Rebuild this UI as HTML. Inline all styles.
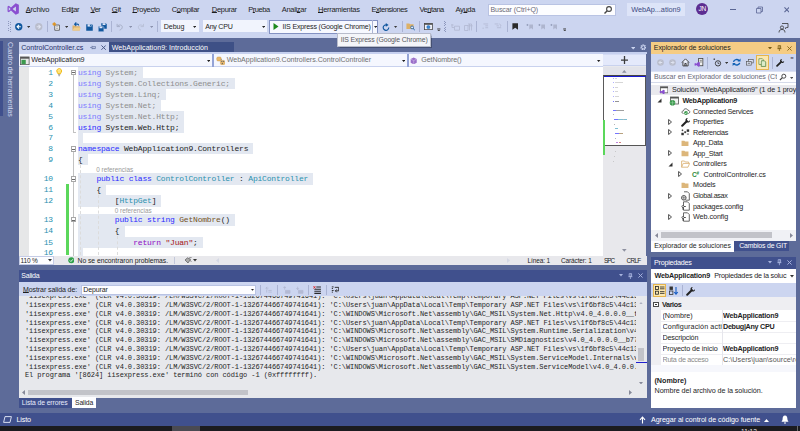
<!DOCTYPE html>
<html>
<head>
<meta charset="utf-8">
<title>Visual Studio</title>
<style>
*{box-sizing:border-box;margin:0;padding:0}
html,body{width:800px;height:431px;overflow:hidden;background:#5d6b99;font-family:"Liberation Sans",sans-serif;font-size:7px;color:#1e1e1e}
.a{position:absolute;white-space:nowrap}
.t{position:absolute;white-space:nowrap;line-height:10px;font-size:7px}
u{text-decoration:underline;text-decoration-thickness:0.55px;text-underline-offset:0.4px}
.code{position:absolute;left:0;white-space:pre;font-family:"Liberation Mono",monospace;font-size:8px;letter-spacing:-0.2px;line-height:11px;height:11px;color:#1e1e1e}
.sel{background:#e3e8f1}
.kw{color:#2a2aff}
.kw2{color:#7b7bff}
.gy{color:#8e8e8e}
.ty{color:#2b91af}
.st{color:#a31515}
.ct{color:#8f08c4}
.mt{color:#74531f}
.ln{position:absolute;left:28.8px;width:24px;text-align:right;font-family:"Liberation Mono",monospace;font-size:8px;letter-spacing:-0.22px;line-height:11px;color:#2b91af}
.out{position:absolute;white-space:pre;font-family:"Liberation Mono",monospace;font-size:7px;letter-spacing:-0.086px;line-height:9px;color:#1e1e1e}
b{font-weight:bold}
</style>
</head>
<body>
<div id="menus"><div class="a" style="left:0px;top:0px;width:800px;height:37.7px;background:#ccd5f0;"></div><svg class="a" style="left:6.8px;top:3.1px" width="12.4" height="12" viewBox="0 0 22 22"><path d="M15.6 0.6 L21.4 3.2 V18.8 L15.6 21.4 L6.9 13.6 L3 16.8 L0.6 15.6 V6.4 L3 5.2 L6.9 8.4 Z M16 6.3 L9.8 11 L16 15.7 Z M2.9 7.8 V14.2 L6.3 11 Z" fill="#8a4fd0" fill-rule="evenodd"/></svg><div class="t" style="left:25.8px;top:4.699999999999999px;font-size:7.5px;color:#1e1e1e;letter-spacing:-0.219px;"><u>A</u>rchivo</div><div class="t" style="left:61.6px;top:4.699999999999999px;font-size:7.5px;color:#1e1e1e;letter-spacing:-0.352px;">Edi<u>t</u>ar</div><div class="t" style="left:90.5px;top:4.699999999999999px;font-size:7.5px;color:#1e1e1e;letter-spacing:-0.455px;"><u>V</u>er</div><div class="t" style="left:111.8px;top:4.699999999999999px;font-size:7.5px;color:#1e1e1e;letter-spacing:-0.131px;"><u>G</u>it</div><div class="t" style="left:132.4px;top:4.699999999999999px;font-size:7.5px;color:#1e1e1e;letter-spacing:-0.303px;"><u>P</u>royecto</div><div class="t" style="left:171.7px;top:4.699999999999999px;font-size:7.5px;color:#1e1e1e;letter-spacing:-0.302px;">C<u>o</u>mpilar</div><div class="t" style="left:211.8px;top:4.699999999999999px;font-size:7.5px;color:#1e1e1e;letter-spacing:-0.301px;"><u>D</u>epurar</div><div class="t" style="left:248.2px;top:4.699999999999999px;font-size:7.5px;color:#1e1e1e;letter-spacing:-0.434px;">P<u>r</u>ueba</div><div class="t" style="left:281.8px;top:4.699999999999999px;font-size:7.5px;color:#1e1e1e;letter-spacing:-0.326px;">Anali<u>z</u>ar</div><div class="t" style="left:318px;top:4.699999999999999px;font-size:7.5px;color:#1e1e1e;letter-spacing:-0.286px;"><u>H</u>erramientas</div><div class="t" style="left:371.5px;top:4.699999999999999px;font-size:7.5px;color:#1e1e1e;letter-spacing:-0.470px;">E<u>x</u>tensiones</div><div class="t" style="left:419.5px;top:4.699999999999999px;font-size:7.5px;color:#1e1e1e;letter-spacing:-0.464px;">Ve<u>n</u>tana</div><div class="t" style="left:455.4px;top:4.699999999999999px;font-size:7.5px;color:#1e1e1e;letter-spacing:-0.288px;">Ay<u>u</u>da</div><div class="a" style="left:488px;top:3.7px;width:128px;height:12px;background:#fdfdff;border:0.5px solid #b9c3e3"></div><div class="t" style="left:490.5px;top:4.6px;font-size:7.0px;color:#6a6a78;letter-spacing:-0.081px;">Buscar (Ctrl+Q)</div><svg class="a" style="left:603px;top:4.5px" width="10" height="10" viewBox="0 0 10 10"><circle cx="6" cy="4" r="2.4" fill="none" stroke="#444" stroke-width="1.1"/><path d="M4.2 5.8 L1.5 8.5" stroke="#444" stroke-width="1.4"/></svg><div class="a" style="left:627px;top:3px;width:58px;height:13px;background:#dde4f8;"></div><div class="t" style="left:631.2px;top:4.5px;font-size:7.3px;color:#3b4a82;letter-spacing:-0.026px;">WebAp...ation9</div><div class="a" style="left:696.2px;top:3.4px;width:11.8px;height:11.8px;background:#5c2d91;border-radius:6px"></div><div class="t" style="left:698.4px;top:4.4px;font-size:6.6px;color:#fff;letter-spacing:-0.2px;">JN</div><div class="a" style="left:730px;top:9.2px;width:6px;height:0.8px;background:#5a6694;"></div><svg class="a" style="left:755px;top:5px" width="10" height="10" viewBox="0 0 10 10"><path d="M1.5 3.5 H6 V8 H1.5 Z M3 3.5 V2 H7.5 V6.5 H6" fill="none" stroke="#5a6694" stroke-width="0.8"/></svg><svg class="a" style="left:783.5px;top:7.2px" width="5.6" height="5.6" viewBox="0 0 6 6"><path d="M0.5 0.5 L5.5 5.5 M5.5 0.5 L0.5 5.5" stroke="#5a6694" stroke-width="1.15"/></svg></div>
<div id="toolbar"><div class="a" style="left:8px;top:21.0px;width:1px;height:1px;background:#8e98bd;"></div><div class="a" style="left:9.5px;top:22.1px;width:1px;height:1px;background:#8e98bd;"></div><div class="a" style="left:8px;top:23.2px;width:1px;height:1px;background:#8e98bd;"></div><div class="a" style="left:9.5px;top:24.3px;width:1px;height:1px;background:#8e98bd;"></div><div class="a" style="left:8px;top:25.4px;width:1px;height:1px;background:#8e98bd;"></div><div class="a" style="left:9.5px;top:26.5px;width:1px;height:1px;background:#8e98bd;"></div><div class="a" style="left:8px;top:27.6px;width:1px;height:1px;background:#8e98bd;"></div><div class="a" style="left:9.5px;top:28.700000000000003px;width:1px;height:1px;background:#8e98bd;"></div><div class="a" style="left:8px;top:29.8px;width:1px;height:1px;background:#8e98bd;"></div><div class="a" style="left:9.5px;top:30.900000000000002px;width:1px;height:1px;background:#8e98bd;"></div><svg class="a" style="left:15px;top:23px" width="7.5" height="7.5" viewBox="0 0 9 9"><circle cx="4.5" cy="4.5" r="4.4" fill="#10579e"/><path d="M4.8 2.2 L2.5 4.5 L4.8 6.8 M2.8 4.5 H7" stroke="#fff" stroke-width="1.3" fill="none"/></svg><svg class="a" style="left:27.3px;top:26px" width="3.2" height="2" viewBox="0 0 5 3"><path d="M0 0 H5 L2.5 3 Z" fill="#3a3a3a"/></svg><svg class="a" style="left:35px;top:23px" width="7.5" height="7.5" viewBox="0 0 9 9"><circle cx="4.5" cy="4.5" r="4.4" fill="#b9bdcc"/><path d="M4.2 2.2 L6.5 4.5 L4.2 6.8 M6.2 4.5 H2" stroke="#dfe3f1" stroke-width="1.3" fill="none"/></svg><div class="a" style="left:47.2px;top:21px;width:0.8px;height:11px;background:#aab3d3;"></div><svg class="a" style="left:52.2px;top:22.4px" width="8.4" height="8.8" viewBox="0 0 10 11"><path d="M3.2 3.8 H9 V10.3 H3.2 Z" fill="#f7f7f7" stroke="#4a4a4a" stroke-width="1"/><path d="M4.8 6 H7.4 M4.8 8 H7.4" stroke="#888" stroke-width="0.8"/><circle cx="2.6" cy="2.6" r="2.1" fill="#e9a53c"/><path d="M2.6 0.2 V5 M0.2 2.6 H5" stroke="#d28a20" stroke-width="0.8"/></svg><svg class="a" style="left:65.3px;top:26px" width="3.2" height="2" viewBox="0 0 5 3"><path d="M0 0 H5 L2.5 3 Z" fill="#3a3a3a"/></svg><svg class="a" style="left:72px;top:22.4px" width="9" height="9" viewBox="0 0 11 11"><path d="M0.6 4.2 H4 L5 5.2 H9.6 V10.4 H0.6 Z" fill="#dcb067"/><path d="M0.6 10.4 L2.6 6.6 H10.8 L9.2 10.4 Z" fill="#f0cc8c"/><path d="M5.2 0.6 L3.2 2.6 L5.2 4.6 M3.4 2.6 H6.5 C7.8 2.6 8.2 3.4 8.2 4.4" stroke="#10579e" stroke-width="1.3" fill="none"/></svg><svg class="a" style="left:86px;top:23.5px" width="7" height="7" viewBox="0 0 9 9"><path d="M0.3 0.3 H7.6 L8.7 1.4 V8.7 H0.3 Z" fill="#10579e"/><rect x="2" y="0.3" width="5" height="3" fill="#dfe6fa"/><rect x="5" y="0.8" width="1.3" height="2" fill="#10579e"/></svg><svg class="a" style="left:98px;top:22.5px" width="9" height="9" viewBox="0 0 11 11"><path d="M4 0.3 H9.6 L10.7 1.4 V7 H4 Z" fill="#10579e"/><rect x="5.6" y="0.3" width="3.5" height="2.2" fill="#dfe6fa"/><path d="M0.3 4 H6 L7.2 5.1 V10.7 H0.3 Z" fill="#10579e" stroke="#ccd5f0" stroke-width="0.7"/><rect x="1.8" y="4.4" width="3.6" height="2" fill="#dfe6fa"/></svg><div class="a" style="left:111px;top:21px;width:0.8px;height:11px;background:#aab3d3;"></div><svg class="a" style="left:116.4px;top:22.8px" width="7.6" height="7.8" viewBox="0 0 10 10"><path d="M1.5 1 V4.6 H5.2 M1.8 4.3 C3.8 1.4 8.6 2 8.2 5.6 C8 7.4 6.6 8.6 4.8 9.2" stroke="#a3aac2" stroke-width="1.2" fill="none"/></svg><svg class="a" style="left:129px;top:26px" width="3.2" height="2" viewBox="0 0 5 3"><path d="M0 0 H5 L2.5 3 Z" fill="#8b92ae"/></svg><svg class="a" style="left:136.8px;top:22.8px" width="7.6" height="7.8" viewBox="0 0 10 10"><path d="M8.5 1 V4.6 H4.8 M8.2 4.3 C6.2 1.4 1.4 2 1.8 5.6 C2 7.4 3.4 8.6 5.2 9.2" stroke="#b8bfd6" stroke-width="1.2" fill="none"/></svg><svg class="a" style="left:149.5px;top:26px" width="3.2" height="2" viewBox="0 0 5 3"><path d="M0 0 H5 L2.5 3 Z" fill="#8b92ae"/></svg><div class="a" style="left:157px;top:21px;width:0.8px;height:11px;background:#aab3d3;"></div><div class="a" style="left:161.4px;top:20.4px;width:37.2px;height:12px;background:#f1f4fd;"></div><div class="t" style="left:163.8px;top:21.7px;font-size:7.1px;color:#1e1e1e;letter-spacing:-0.081px;">Debug</div><svg class="a" style="left:193.3px;top:26px" width="3.2" height="2" viewBox="0 0 5 3"><path d="M0 0 H5 L2.5 3 Z" fill="#2a2a2a"/></svg><div class="a" style="left:203px;top:20.4px;width:63.6px;height:12px;background:#f1f4fd;"></div><div class="t" style="left:205.2px;top:21.7px;font-size:7.1px;color:#1e1e1e;letter-spacing:-0.253px;">Any CPU</div><svg class="a" style="left:261.5px;top:26px" width="3.2" height="2" viewBox="0 0 5 3"><path d="M0 0 H5 L2.5 3 Z" fill="#2a2a2a"/></svg><div class="a" style="left:269.3px;top:19.5px;width:109.2px;height:14.2px;background:#f6f8ff;border:0.9px solid #8391c2"></div><div class="a" style="left:371.8px;top:20.4px;width:0.8px;height:12.4px;background:#aab3d3;"></div><svg class="a" style="left:273.2px;top:23.2px" width="6" height="7" viewBox="0 0 6 7"><path d="M0.5 0 L5.5 3.5 L0.5 7 Z" fill="#1e8a1e"/></svg><div class="t" style="left:282.5px;top:21.7px;font-size:7.1px;color:#1e1e1e;letter-spacing:-0.183px;">IIS Express (Google Chrome)</div><svg class="a" style="left:373.7px;top:26px" width="3.2" height="2" viewBox="0 0 5 3"><path d="M0 0 H5 L2.5 3 Z" fill="#2a2a2a"/></svg><svg class="a" style="left:381.8px;top:23px" width="8" height="8.4" viewBox="0 0 9 10"><path d="M7.8 5.5 A3.3 3.3 0 1 1 5.5 2.3" stroke="#10579e" stroke-width="1.4" fill="none"/><path d="M4.3 0 L7.6 2.3 L4.3 4.6 Z" fill="#10579e"/></svg><svg class="a" style="left:394.4px;top:26px" width="3.2" height="2" viewBox="0 0 5 3"><path d="M0 0 H5 L2.5 3 Z" fill="#3a3a3a"/></svg><div class="a" style="left:401.5px;top:21px;width:0.8px;height:11px;background:#aab3d3;"></div><svg class="a" style="left:406px;top:23.2px" width="9.4" height="7.4" viewBox="0 0 11 9"><path d="M0.3 0.5 H3.8 L4.8 1.6 H9 V7.2 H0.3 Z" fill="#dcb067"/><circle cx="7.2" cy="5.4" r="1.7" fill="#e9eefc" stroke="#10579e" stroke-width="0.9"/><path d="M8.4 6.6 L10.4 8.6" stroke="#10579e" stroke-width="1.2"/></svg><div class="a" style="left:419.3px;top:21px;width:0.8px;height:11px;background:#aab3d3;"></div><svg class="a" style="left:424.3px;top:23.3px" width="8.8" height="7.2" viewBox="0 0 10 8"><rect x="0.5" y="0.5" width="9" height="7" fill="#f2f4fb" stroke="#444" stroke-width="0.9"/><rect x="0.5" y="0.5" width="9" height="1.4" fill="#444"/><circle cx="5" cy="4.6" r="1.9" fill="#3a8ad6" stroke="#10579e" stroke-width="0.5"/></svg><svg class="a" style="left:437.3px;top:27.8px" width="3.6" height="3.6" viewBox="0 0 5 5"><path d="M0.3 0.5 H4.7" stroke="#444" stroke-width="0.9"/><path d="M0 2 H5 L2.5 5 Z" fill="#444"/></svg><div class="a" style="left:443.5px;top:21.0px;width:1px;height:1px;background:#8e98bd;"></div><div class="a" style="left:445.0px;top:22.1px;width:1px;height:1px;background:#8e98bd;"></div><div class="a" style="left:443.5px;top:23.2px;width:1px;height:1px;background:#8e98bd;"></div><div class="a" style="left:445.0px;top:24.3px;width:1px;height:1px;background:#8e98bd;"></div><div class="a" style="left:443.5px;top:25.4px;width:1px;height:1px;background:#8e98bd;"></div><div class="a" style="left:445.0px;top:26.5px;width:1px;height:1px;background:#8e98bd;"></div><div class="a" style="left:443.5px;top:27.6px;width:1px;height:1px;background:#8e98bd;"></div><div class="a" style="left:445.0px;top:28.700000000000003px;width:1px;height:1px;background:#8e98bd;"></div><div class="a" style="left:443.5px;top:29.8px;width:1px;height:1px;background:#8e98bd;"></div><div class="a" style="left:445.0px;top:30.900000000000002px;width:1px;height:1px;background:#8e98bd;"></div><svg class="a" style="left:450.7px;top:22.6px" width="9" height="8" viewBox="0 0 9 8"><path d="M1 1 V4.5 M0.3 2 H2.5 M1 4.5 H3.5 M3.5 3.2 H8.5 V7.2 H3.5 Z" stroke="#b3bad4" stroke-width="0.9" fill="none"/></svg><svg class="a" style="left:463.6px;top:22.6px" width="9" height="8" viewBox="0 0 9 8"><path d="M0.5 2.5 H4 V7.5 H0.5 Z M4 1 H7.5 V7.5 M5.5 1 V7.5 M4 2.8 H8.6" stroke="#b3bad4" stroke-width="0.9" fill="none"/></svg><div class="a" style="left:476.2px;top:21px;width:0.8px;height:11px;background:#aab3d3;"></div><svg class="a" style="left:482.3px;top:23.3px" width="6.6" height="6.6" viewBox="0 0 7 7"><path d="M1.5 1 H6.5 M3.5 3 H6.5 M3.5 5 H6.5 M0.5 5.5 H2" stroke="#b3bad4" stroke-width="0.9" fill="none"/></svg><svg class="a" style="left:494.4px;top:23.3px" width="7.8" height="6.6" viewBox="0 0 8 7"><path d="M0.5 1 H4.5 M2.5 3 H5 M3 5 H7.5 M5.5 1 C7.5 1.5 7.5 3.5 6.2 4" stroke="#b3bad4" stroke-width="0.9" fill="none"/></svg><div class="a" style="left:507px;top:21px;width:0.8px;height:11px;background:#aab3d3;"></div><svg class="a" style="left:512px;top:23.3px" width="6.4" height="7" viewBox="0 0 7 8"><path d="M0.3 0.3 H6.7 V7.7 L3.5 5.4 L0.3 7.7 Z" fill="#2b2b2b"/></svg><svg class="a" style="left:525.5px;top:22.8px" width="7.4" height="7.2" viewBox="0 0 9 8"><path d="M4 1.5 H8.5 V7.5 L6.2 5.8 L4 7.5 Z" fill="#aeb5ce"/><path d="M0.5 2 L3 2 M1.8 0.8 V3.2" stroke="#8f97b5" stroke-width="0.9"/></svg><svg class="a" style="left:538px;top:22.8px" width="7.4" height="7.2" viewBox="0 0 9 8"><path d="M4 1.5 H8.5 V7.5 L6.2 5.8 L4 7.5 Z" fill="#aeb5ce"/><path d="M0.5 2 L3 2 M1.8 0.8 V3.2" stroke="#8f97b5" stroke-width="0.9"/></svg><svg class="a" style="left:550.2px;top:22.8px" width="7.4" height="7.2" viewBox="0 0 9 8"><path d="M4 1.5 H8.5 V7.5 L6.2 5.8 L4 7.5 Z" fill="#aeb5ce"/><path d="M0.5 2 L3 2 M1.8 0.8 V3.2" stroke="#8f97b5" stroke-width="0.9"/></svg><svg class="a" style="left:562.6px;top:27.8px" width="3.6" height="3.6" viewBox="0 0 5 5"><path d="M0.3 0.5 H4.7" stroke="#444" stroke-width="0.9"/><path d="M0 2 H5 L2.5 5 Z" fill="#444"/></svg><svg class="a" style="left:778px;top:21.5px" width="11" height="11" viewBox="0 0 11 11"><path d="M4 1.5 H10 V5.5 H8.5 L7.5 6.7 V5.5" stroke="#333" stroke-width="0.8" fill="none"/><circle cx="4" cy="5.5" r="1.6" stroke="#333" stroke-width="0.8" fill="none"/><path d="M1 10.5 C1 8 2.5 7.5 4 7.5 C5.5 7.5 7 8 7 10.5" stroke="#333" stroke-width="0.8" fill="none"/></svg></div>
<div id="leftstrip"><div class="a" style="left:0px;top:41px;width:3px;height:75px;background:#40508d;"></div><div class="a" style="left:13.6px;top:42px;transform-origin:0 0;transform:rotate(90deg);font-size:6.95px;line-height:8px;color:#d3daf3">Cuadro de herramientas</div></div>
<div id="editor"><div class="a" style="left:19px;top:51.8px;width:627.5px;height:2.4px;background:#c6d0ef;"></div><div class="a" style="left:19px;top:41.6px;width:90px;height:12.4px;background:#ccd5f0;"></div><div class="t" style="left:21.2px;top:42.7px;font-size:7.1px;color:#1f2d66;letter-spacing:-0.010px;">ControlController.cs</div><svg class="a" style="left:89.5px;top:45.3px" width="6" height="5" viewBox="0 0 6 5"><path d="M0 2.5 H2 M2 0.8 V4.2 M2 1.5 H5.5 V3.2 H2 M2 3.6 H5.5" stroke="#5d6b99" stroke-width="0.6" fill="none"/></svg><svg class="a" style="left:100.5px;top:45.2px" width="5.2" height="5.2" viewBox="0 0 6 6"><path d="M0.5 0.5 L5.5 5.5 M5.5 0.5 L0.5 5.5" stroke="#4a5784" stroke-width="1.15"/></svg><div class="a" style="left:109px;top:42.2px;width:125px;height:9.7px;background:#3e5086;"></div><div class="t" style="left:111.7px;top:42.5px;font-size:7.1px;color:#fff;letter-spacing:0.021px;">WebApplication9: Introducción</div><svg class="a" style="left:630.5px;top:47.2px" width="4.4" height="2.6" viewBox="0 0 5 3"><path d="M0 0 H5 L2.5 3 Z" fill="#ccd5f0"/></svg><svg class="a" style="left:639.7px;top:43.7px" width="6.6" height="6.6" viewBox="0 0 7 7"><circle cx="3.5" cy="3.5" r="2.3" fill="none" stroke="#ccd5f0" stroke-width="1.7" stroke-dasharray="1.1 0.7"/><circle cx="3.5" cy="3.5" r="1.7" fill="none" stroke="#ccd5f0" stroke-width="0.9"/></svg><div class="a" style="left:19px;top:54px;width:584px;height:12.7px;background:#f5f7fe;border-bottom:0.8px solid #c9d2ee"></div><div class="a" style="left:212px;top:54px;width:1.5px;height:12.6px;background:#94a3d6;"></div><div class="a" style="left:407px;top:54px;width:1.5px;height:12.6px;background:#94a3d6;"></div><div class="a" style="left:602.7px;top:53.6px;width:43.8px;height:12.8px;background:#e4e9fb;border-bottom:0.8px solid #c9d2ee;border-top:0.6px solid #d5dcf5"></div><svg class="a" style="left:20px;top:55.6px" width="9.6" height="9.6" viewBox="0 0 10 10"><rect x="0.5" y="1" width="9" height="8" fill="#e9e9e9" stroke="#555" stroke-width="0.8"/><rect x="0.5" y="1" width="9" height="1.8" fill="#555"/><rect x="1.5" y="4" width="4.5" height="4.5" fill="#3c9a4e"/></svg><div class="t" style="left:31.2px;top:55.4px;font-size:7.2px;color:#1e1e1e;letter-spacing:-0.028px;">WebApplication9</div><svg class="a" style="left:206.8px;top:59.8px" width="3.4" height="2.1" viewBox="0 0 5 3"><path d="M0 0 H5 L2.5 3 Z" fill="#222"/></svg><svg class="a" style="left:215.5px;top:55.6px" width="9.6" height="9.6" viewBox="0 0 10 10"><rect x="0.8" y="1" width="4.6" height="4.2" rx="1.3" fill="#e8b86a" stroke="#c8913a" stroke-width="0.4"/><rect x="4.6" y="4.6" width="4.6" height="4.4" rx="1.3" fill="#e8b86a" stroke="#c8913a" stroke-width="0.4"/><path d="M5 3 L6.2 4.4" stroke="#777" stroke-width="0.7"/><circle cx="6" cy="5.6" r="0.7" fill="#666"/><circle cx="7.9" cy="5.6" r="0.7" fill="#666"/><circle cx="6.6" cy="7.8" r="0.7" fill="#666"/></svg><div class="t" style="left:226.7px;top:55.4px;font-size:7.1px;color:#707070;letter-spacing:-0.013px;">WebApplication9.Controllers.ControlController</div><svg class="a" style="left:401.8px;top:59.8px" width="3.4" height="2.1" viewBox="0 0 5 3"><path d="M0 0 H5 L2.5 3 Z" fill="#222"/></svg><svg class="a" style="left:410.2px;top:56.6px" width="7.4" height="7.8" viewBox="0 0 8 9"><path d="M4 0.5 L7.5 2.3 V6.5 L4 8.5 L0.5 6.5 V2.3 Z" fill="#9a6fc9"/><path d="M0.8 2.5 L4 4.2 L7.2 2.5 M4 4.2 V8" stroke="#d9c6ee" stroke-width="0.6" fill="none"/></svg><div class="t" style="left:421.3px;top:55.4px;font-size:7.1px;color:#707070;letter-spacing:-0.099px;">GetNombre()</div><svg class="a" style="left:597.3px;top:59.8px" width="3.4" height="2.1" viewBox="0 0 5 3"><path d="M0 0 H5 L2.5 3 Z" fill="#222"/></svg><svg class="a" style="left:620.9px;top:55.7px" width="7" height="8.2" viewBox="0 0 7 8.2"><path d="M3.5 0 V8.2 M0 4.1 H7" stroke="#3a3a3a" stroke-width="1.3"/></svg><div class="a" style="left:19px;top:66.5px;width:584px;height:190.0px;background:#fff;"></div><div class="a" style="left:19px;top:66.5px;width:10.3px;height:190.0px;background:#e6e7e8;"></div><div id="code"><div class="a sel" style="left:78px;top:66.75px;width:65.00px;height:11.25px"></div><div class="a sel" style="left:78px;top:77.7px;width:157.00px;height:11.10px"></div><div class="a sel" style="left:78px;top:88.5px;width:88.00px;height:11.30px"></div><div class="a sel" style="left:78px;top:99.5px;width:83.40px;height:11.30px"></div><div class="a sel" style="left:78px;top:110.5px;width:106.40px;height:11.30px"></div><div class="a sel" style="left:78px;top:121.5px;width:106.40px;height:11.00px"></div><div class="a sel" style="left:78px;top:132.2px;width:5.20px;height:11.20px"></div><div class="a sel" style="left:78px;top:143.1px;width:175.40px;height:11.40px"></div><div class="a sel" style="left:78px;top:154.2px;width:9.80px;height:11.30px"></div><div class="a sel" style="left:78px;top:173.25px;width:235.20px;height:11.45px"></div><div class="a sel" style="left:78px;top:184.4px;width:28.20px;height:11.30px"></div><div class="a sel" style="left:78px;top:195.4px;width:83.40px;height:11.30px"></div><div class="a sel" style="left:78px;top:214.0px;width:157.00px;height:11.70px"></div><div class="a sel" style="left:78px;top:225.4px;width:46.60px;height:11.90px"></div><div class="a sel" style="left:78px;top:237.0px;width:124.80px;height:10.70px"></div><div class="a sel" style="left:78px;top:247.4px;width:5.20px;height:8.40px"></div><div class="a" style="left:80px;top:164.8px;width:0;height:90.69999999999999px;border-left:0.6px dashed #dcdcdc"></div><div class="a" style="left:98.3px;top:195.4px;width:0;height:60.099999999999994px;border-left:0.6px dashed #dcdcdc"></div><div class="a" style="left:116.6px;top:236.3px;width:0;height:19.19999999999999px;border-left:0.6px dashed #dcdcdc"></div><div class="a" style="left:73.2px;top:74px;width:0.7px;height:58px;background:#c2c2c2;"></div><div class="a" style="left:73.2px;top:131.5px;width:3px;height:0.7px;background:#c2c2c2;"></div><div class="a" style="left:73.2px;top:150px;width:0.7px;height:105.5px;background:#c2c2c2;"></div><div class="a" style="left:70.9px;top:69.85px;width:5.4px;height:5.4px;background:#fff;border:0.6px solid #a8a8a8"></div><div class="a" style="left:72.2px;top:72.25px;width:2.8px;height:0.6px;background:#6a6a6a;"></div><div class="a" style="left:70.9px;top:146.2px;width:5.4px;height:5.4px;background:#fff;border:0.6px solid #a8a8a8"></div><div class="a" style="left:72.2px;top:148.6px;width:2.8px;height:0.6px;background:#6a6a6a;"></div><div class="a" style="left:70.9px;top:176.35px;width:5.4px;height:5.4px;background:#fff;border:0.6px solid #a8a8a8"></div><div class="a" style="left:72.2px;top:178.75px;width:2.8px;height:0.6px;background:#6a6a6a;"></div><div class="a" style="left:70.9px;top:217.1px;width:5.4px;height:5.4px;background:#fff;border:0.6px solid #a8a8a8"></div><div class="a" style="left:72.2px;top:219.5px;width:2.8px;height:0.6px;background:#6a6a6a;"></div><div class="a" style="left:66px;top:184.4px;width:3px;height:71.1px;background:#5bd75b;"></div><svg class="a" style="left:55.6px;top:67.6px" width="6.4" height="9" viewBox="0 0 7 10"><path d="M3.5 0.7 C5.2 0.7 6.2 1.9 6.2 3.3 C6.2 4.6 5.2 5.2 4.9 6.4 H2.1 C1.8 5.2 0.8 4.6 0.8 3.3 C0.8 1.9 1.8 0.7 3.5 0.7 Z" fill="#ffe27a" stroke="#ecb300" stroke-width="1"/><path d="M2.6 2.6 C2.9 2 3.4 1.9 3.8 1.9" stroke="#fff7cf" stroke-width="0.7" fill="none"/><path d="M2.3 7.4 H4.7 M2.6 8.6 H4.4" stroke="#8d8d8d" stroke-width="0.9"/></svg><div class="ln" style="top:66.75px">1</div><div class="code" style="left:78px;top:66.75px"><span class="kw2">using</span><span class="gy"> System;</span></div><div class="ln" style="top:77.7px">2</div><div class="code" style="left:78px;top:77.7px"><span class="kw2">using</span><span class="gy"> System.Collections.Generic;</span></div><div class="ln" style="top:88.5px">3</div><div class="code" style="left:78px;top:88.5px"><span class="kw2">using</span><span class="gy"> System.Linq;</span></div><div class="ln" style="top:99.5px">4</div><div class="code" style="left:78px;top:99.5px"><span class="kw2">using</span><span class="gy"> System.Net;</span></div><div class="ln" style="top:110.5px">5</div><div class="code" style="left:78px;top:110.5px"><span class="kw2">using</span><span class="gy"> System.Net.Http;</span></div><div class="ln" style="top:121.5px">6</div><div class="code" style="left:78px;top:121.5px"><span class="kw">using</span> System.Web.Http;</div><div class="ln" style="top:132.2px">7</div><div class="ln" style="top:143.1px">8</div><div class="code" style="left:78px;top:143.1px"><span class="kw">namespace</span> WebApplication9.Controllers</div><div class="ln" style="top:154.2px">9</div><div class="code" style="left:78px;top:154.2px">{</div><div class="ln" style="top:173.25px">10</div><div class="code" style="left:78px;top:173.25px">    <span class="kw">public</span> <span class="kw">class</span> <span class="ty">ControlController</span> : <span class="ty">ApiController</span></div><div class="ln" style="top:184.4px">11</div><div class="code" style="left:78px;top:184.4px">    {</div><div class="ln" style="top:195.4px">12</div><div class="code" style="left:78px;top:195.4px">        [<span class="ty">HttpGet</span>]</div><div class="ln" style="top:214.0px">13</div><div class="code" style="left:78px;top:214.0px">        <span class="kw">public</span> <span class="kw">string</span> <span class="mt">GetNombre</span>()</div><div class="ln" style="top:225.4px">14</div><div class="code" style="left:78px;top:225.4px">        {</div><div class="ln" style="top:237.0px">15</div><div class="code" style="left:78px;top:237.0px">            <span class="ct">return</span> <span class="st">"Juan"</span>;</div><div class="ln" style="top:247.4px">16</div><div class="t" style="left:96.2px;top:164.7px;font-size:6.4px;color:#9a9a9a;letter-spacing:0.004px;">0 referencias</div><div class="t" style="left:114.7px;top:205.8px;font-size:6.4px;color:#9a9a9a;letter-spacing:0.004px;">0 referencias</div></div><div id="map"><div class="a" style="left:602.8px;top:66px;width:43.7px;height:190.5px;background:#e8e8ec;"></div><div class="a" style="left:602.8px;top:66.6px;width:43.7px;height:8.5px;background:#e2e3ea;"></div><svg class="a" style="left:622.2px;top:70px" width="4.6" height="2.8" viewBox="0 0 5 3"><path d="M0 3 H5 L2.5 0 Z" fill="#8d90a0"/></svg><div class="a" style="left:602.9px;top:75.4px;width:43.5px;height:71px;background:#fff;border:0.8px solid #555;border-left:1.6px solid #5a5a5a;border-top:1px solid #444"></div><div class="a" style="left:604.4px;top:76.3px;width:41.3px;height:1.1px;background:#1a1ad0;"></div><div class="a" style="left:613.00px;top:77.50px;width:1.45px;height:1px;background:#8f8fff;opacity:.7"></div><div class="a" style="left:614.74px;top:77.50px;width:2.03px;height:1px;background:#c4c4c4;opacity:.7"></div><div class="a" style="left:613.00px;top:82.12px;width:1.45px;height:1px;background:#8f8fff;opacity:.7"></div><div class="a" style="left:614.74px;top:82.12px;width:7.83px;height:1px;background:#c4c4c4;opacity:.7"></div><div class="a" style="left:613.00px;top:86.74px;width:1.45px;height:1px;background:#8f8fff;opacity:.7"></div><div class="a" style="left:614.74px;top:86.74px;width:3.48px;height:1px;background:#c4c4c4;opacity:.7"></div><div class="a" style="left:613.00px;top:91.36px;width:1.45px;height:1px;background:#8f8fff;opacity:.7"></div><div class="a" style="left:614.74px;top:91.36px;width:3.19px;height:1px;background:#c4c4c4;opacity:.7"></div><div class="a" style="left:613.00px;top:95.98px;width:1.45px;height:1px;background:#8f8fff;opacity:.7"></div><div class="a" style="left:614.74px;top:95.98px;width:4.64px;height:1px;background:#c4c4c4;opacity:.7"></div><div class="a" style="left:613.00px;top:100.60px;width:1.45px;height:1px;background:#3b3bff;opacity:.7"></div><div class="a" style="left:614.74px;top:100.60px;width:4.64px;height:1px;background:#666;opacity:.7"></div><div class="a" style="left:613.00px;top:109.84px;width:2.61px;height:1px;background:#3b3bff;opacity:.7"></div><div class="a" style="left:615.90px;top:109.84px;width:7.83px;height:1px;background:#777;opacity:.7"></div><div class="a" style="left:613.00px;top:114.46px;width:0.80px;height:1px;background:#999;opacity:.7"></div><div class="a" style="left:614.16px;top:119.08px;width:3.48px;height:1px;background:#3b3bff;opacity:.7"></div><div class="a" style="left:617.93px;top:119.08px;width:4.93px;height:1px;background:#4aa3bf;opacity:.7"></div><div class="a" style="left:623.15px;top:119.08px;width:0.80px;height:1px;background:#999;opacity:.7"></div><div class="a" style="left:623.73px;top:119.08px;width:3.77px;height:1px;background:#4aa3bf;opacity:.7"></div><div class="a" style="left:614.16px;top:123.70px;width:0.80px;height:1px;background:#999;opacity:.7"></div><div class="a" style="left:615.32px;top:128.32px;width:2.61px;height:1px;background:#4aa3bf;opacity:.7"></div><div class="a" style="left:615.32px;top:132.94px;width:3.77px;height:1px;background:#3b3bff;opacity:.7"></div><div class="a" style="left:619.38px;top:132.94px;width:3.19px;height:1px;background:#9a7b4a;opacity:.7"></div><div class="a" style="left:615.32px;top:137.56px;width:0.80px;height:1px;background:#999;opacity:.7"></div><div class="a" style="left:616.48px;top:142.18px;width:1.74px;height:1px;background:#a44fd0;opacity:.7"></div><div class="a" style="left:618.51px;top:142.18px;width:2.03px;height:1px;background:#c05050;opacity:.7"></div><div class="a" style="left:615.32px;top:151.42px;width:0.80px;height:1px;background:#bbb;opacity:.7"></div><div class="a" style="left:614.16px;top:156.04px;width:0.80px;height:1px;background:#bbb;opacity:.7"></div><div class="a" style="left:613.00px;top:160.66px;width:0.80px;height:1px;background:#bbb;opacity:.7"></div><div class="a" style="left:602.8px;top:119.5px;width:2.6px;height:35px;background:#5bd75b;"></div><svg class="a" style="left:622.2px;top:248.8px" width="4.6" height="2.8" viewBox="0 0 5 3"><path d="M0 0 H5 L2.5 3 Z" fill="#8d90a0"/></svg></div><div id="edbar"><div class="a" style="left:19px;top:255.5px;width:627.5px;height:9.4px;background:#e8e8ec;"></div><div class="a" style="left:19px;top:255.5px;width:34.5px;height:9.4px;background:#fdfdff;border:0.5px solid #c5cce6"></div><div class="t" style="left:20.5px;top:255.5px;font-size:6.5px;color:#1e1e1e;letter-spacing:-0.171px;">110 %</div><svg class="a" style="left:48px;top:259.3px" width="4" height="2.5" viewBox="0 0 5 3"><path d="M0 0 H5 L2.5 3 Z" fill="#333"/></svg><svg class="a" style="left:67.8px;top:257.2px" width="6.6" height="6.6" viewBox="0 0 7 7"><circle cx="3.5" cy="3.5" r="3.2" fill="#2fa14a"/><path d="M1.9 3.6 L3.1 4.8 L5.2 2.4" stroke="#fff" stroke-width="0.9" fill="none"/></svg><div class="t" style="left:77.5px;top:255.5px;font-size:6.8px;color:#1e1e1e;letter-spacing:-0.030px;">No se encontraron problemas.</div><div class="a" style="left:174px;top:256.5px;width:0.7px;height:7.4px;background:#c3c8da;"></div><svg class="a" style="left:183.5px;top:257.0px" width="8" height="7" viewBox="0 0 8 7"><path d="M1 3 L3.5 0.8 L6.5 2.5 L4 6 Z" fill="#aaa" stroke="#444" stroke-width="0.6"/><path d="M5 1 L7.5 0.5 M6 3.5 L7.5 4.5" stroke="#444" stroke-width="0.6"/></svg><svg class="a" style="left:193px;top:259.3px" width="4" height="2.5" viewBox="0 0 5 3"><path d="M0 0 H5 L2.5 3 Z" fill="#333"/></svg><svg class="a" style="left:215.5px;top:258.0px" width="3" height="5" viewBox="0 0 3 5"><path d="M3 0 V5 L0 2.5 Z" fill="#d5d8e4"/></svg><svg class="a" style="left:507px;top:258.0px" width="3" height="5" viewBox="0 0 3 5"><path d="M0 0 V5 L3 2.5 Z" fill="#d5d8e4"/></svg><div class="t" style="left:527.5px;top:255.5px;font-size:6.5px;color:#1e1e1e;letter-spacing:-0.112px;">Línea: 1</div><div class="t" style="left:561px;top:255.5px;font-size:6.5px;color:#1e1e1e;letter-spacing:-0.141px;">Carácter: 1</div><div class="t" style="left:604px;top:255.5px;font-size:6.4px;color:#1e1e1e;letter-spacing:-0.980px;">SPC</div><div class="t" style="left:626.5px;top:255.5px;font-size:6.4px;color:#1e1e1e;letter-spacing:-0.651px;">CRLF</div></div></div>
<div id="output"><div class="a" style="left:19px;top:270.3px;width:627.5px;height:11.6px;background:#40508d;"></div><div class="t" style="left:21.3px;top:271.3px;font-size:7.0px;color:#fff;letter-spacing:-0.228px;">Salida</div><svg class="a" style="left:618.8px;top:274.4px" width="4" height="2.5" viewBox="0 0 5 3"><path d="M0 0 H5 L2.5 3 Z" fill="#a9b5df"/></svg><svg class="a" style="left:628.4px;top:272.5px" width="4.8" height="6.4" viewBox="0 0 6 8"><path d="M1.5 0.8 H4.5 V4.4 H1.5 Z M0.5 4.6 H5.5 M3 4.6 V7.8 M3.7 0.8 V4.4" stroke="#a9b5df" stroke-width="1" fill="none"/></svg><svg class="a" style="left:637.5px;top:273.1px" width="5" height="5" viewBox="0 0 6 6"><path d="M0.5 0.5 L5.5 5.5 M5.5 0.5 L0.5 5.5" stroke="#a9b5df" stroke-width="1.15"/></svg><div class="a" style="left:19px;top:281.8px;width:627.5px;height:14.4px;background:#ccd5f0;"></div><div class="t" style="left:23px;top:285.3px;font-size:7.0px;color:#1e1e1e;letter-spacing:-0.086px;"><u>M</u>ostrar salida de:</div><div class="a" style="left:80.8px;top:284.6px;width:175px;height:10px;background:#fdfdff;border:0.5px solid #b9c3e3"></div><div class="t" style="left:83.3px;top:285.3px;font-size:7.0px;color:#1e1e1e;letter-spacing:-0.142px;">Depurar</div><svg class="a" style="left:251px;top:289px" width="3" height="1.9" viewBox="0 0 5 3"><path d="M0 0 H5 L2.5 3 Z" fill="#222"/></svg><div class="a" style="left:260px;top:285px;width:0.8px;height:10px;background:#aab3d3;"></div><svg class="a" style="left:265.3px;top:285.8px" width="7.6" height="8" viewBox="0 0 9 9"><path d="M2.5 0.8 L1 2.3 L2.5 3.8 M1.2 2.3 H4 M4 5 H8 M4 7 H8 M2 4 V7.5" stroke="#b3bad4" stroke-width="1" fill="none"/></svg><div class="a" style="left:277.3px;top:285px;width:0.8px;height:10px;background:#aab3d3;"></div><svg class="a" style="left:283.4px;top:285.8px" width="7.4" height="8" viewBox="0 0 9 9"><path d="M2 0.5 V4 M0.5 2 L2 0.5 L3.5 2 M3 5 H8.5 V8.5 H3 Z" stroke="#b3bad4" stroke-width="1" fill="#b3bad4"/></svg><svg class="a" style="left:296.2px;top:285.8px" width="7.4" height="8" viewBox="0 0 9 9"><path d="M2 0.5 V4 M0.5 2.5 L2 4 L3.5 2.5 M3 5 H8.5 V8.5 H3 Z" stroke="#b3bad4" stroke-width="1" fill="#b3bad4"/></svg><div class="a" style="left:308.4px;top:285px;width:0.8px;height:10px;background:#aab3d3;"></div><svg class="a" style="left:313px;top:285.8px" width="8.2" height="8" viewBox="0 0 9 9"><path d="M3.6 1.2 H8.8 M1.4 3.6 H8.8 M1.4 6 H8.8 M1.4 8.3 H8.8" stroke="#2a2a2a" stroke-width="1.2"/><path d="M0.3 0.2 L2.8 2.6 M2.8 0.2 L0.3 2.6" stroke="#e02020" stroke-width="1.1"/></svg><div class="a" style="left:325.8px;top:285px;width:0.8px;height:10px;background:#aab3d3;"></div><svg class="a" style="left:330.6px;top:286.4px" width="8.8" height="7.2" viewBox="0 0 9 8"><path d="M0.5 1 H2.5 M0.5 2.8 H1.8 M0.5 5 H2.5 M0.5 6.8 H1.8 M3.8 1.5 H8.2 V5.4 H4.6 M6 3.8 L4.4 5.4 L6 7" stroke="#222" stroke-width="1" fill="none"/></svg><div class="a" style="left:19px;top:296.1px;width:627.5px;height:101.59999999999997px;background:#e7e8ec;overflow:hidden"><div class="out" style="left:6px;top:-3.90px">'iisexpress.exe' (CLR v4.0.30319: /LM/W3SVC/2/ROOT-1-132674466749741641): 'C:\Users\juan\AppData\Local\Temp\Temporary ASP.NET Files\vs\1f6bf8c5\44c13</div><div class="out" style="left:6px;top:4.91px">'iisexpress.exe' (CLR v4.0.30319: /LM/W3SVC/2/ROOT-1-132674466749741641): 'C:\Users\juan\AppData\Local\Temp\Temporary ASP.NET Files\vs\1f6bf8c5\44c13</div><div class="out" style="left:6px;top:13.72px">'iisexpress.exe' (CLR v4.0.30319: /LM/W3SVC/2/ROOT-1-132674466749741641): 'C:\WINDOWS\Microsoft.Net\assembly\GAC_MSIL\System.Net.Http\v4.0_4.0.0.0__t</div><div class="out" style="left:6px;top:22.53px">'iisexpress.exe' (CLR v4.0.30319: /LM/W3SVC/2/ROOT-1-132674466749741641): 'C:\Users\juan\AppData\Local\Temp\Temporary ASP.NET Files\vs\1f6bf8c5\44c13</div><div class="out" style="left:6px;top:31.34px">'iisexpress.exe' (CLR v4.0.30319: /LM/W3SVC/2/ROOT-1-132674466749741641): 'C:\WINDOWS\Microsoft.Net\assembly\GAC_MSIL\System.Runtime.Serialization\v4</div><div class="out" style="left:6px;top:40.15px">'iisexpress.exe' (CLR v4.0.30319: /LM/W3SVC/2/ROOT-1-132674466749741641): 'C:\WINDOWS\Microsoft.Net\assembly\GAC_MSIL\SMDiagnostics\v4.0_4.0.0.0__b77</div><div class="out" style="left:6px;top:48.96px">'iisexpress.exe' (CLR v4.0.30319: /LM/W3SVC/2/ROOT-1-132674466749741641): 'C:\Users\juan\AppData\Local\Temp\Temporary ASP.NET Files\vs\1f6bf8c5\44c13</div><div class="out" style="left:6px;top:57.77px">'iisexpress.exe' (CLR v4.0.30319: /LM/W3SVC/2/ROOT-1-132674466749741641): 'C:\WINDOWS\Microsoft.Net\assembly\GAC_MSIL\System.ServiceModel.Internals\v</div><div class="out" style="left:6px;top:66.58px">'iisexpress.exe' (CLR v4.0.30319: /LM/W3SVC/2/ROOT-1-132674466749741641): 'C:\WINDOWS\Microsoft.Net\assembly\GAC_MSIL\System.ServiceModel\v4.0_4.0.0.</div><div class="out" style="left:6px;top:75.39px">El programa '[8624] iisexpress.exe' terminó con código -1 (0xffffffff).</div></div><div class="a" style="left:636px;top:296.1px;width:10.5px;height:91px;background:#e7e8ec;"></div><div class="a" style="left:637.7px;top:348px;width:6.4px;height:13px;background:#c2c3c9;"></div><div class="a" style="left:636px;top:361.5px;width:10.5px;height:1px;background:#1f1fd0;"></div><svg class="a" style="left:639.2px;top:301.8px" width="4" height="2.5" viewBox="0 0 5 3"><path d="M0 3 H5 L2.5 0 Z" fill="#aeb1c0"/></svg><svg class="a" style="left:639.2px;top:381.6px" width="4" height="2.5" viewBox="0 0 5 3"><path d="M0 0 H5 L2.5 3 Z" fill="#868999"/></svg><svg class="a" style="left:628.6px;top:389.7px" width="3" height="5" viewBox="0 0 3 5"><path d="M0 0 V5 L3 2.5 Z" fill="#868999"/></svg><svg class="a" style="left:22px;top:389.7px" width="3" height="5" viewBox="0 0 3 5"><path d="M3 0 V5 L0 2.5 Z" fill="#868999"/></svg><div class="a" style="left:27.5px;top:390px;width:220px;height:4.5px;background:#c2c3c9;"></div><div class="a" style="left:19px;top:398.3px;width:53px;height:10.2px;background:#40508d;"></div><div class="t" style="left:21.8px;top:398.4px;font-size:6.8px;color:#e8ecfb;letter-spacing:-0.090px;">Lista de errores</div><div class="a" style="left:72px;top:397.2px;width:23.8px;height:11.2px;background:#fdfdff;"></div><div class="t" style="left:75px;top:398.4px;font-size:6.8px;color:#1e1e1e;letter-spacing:-0.134px;">Salida</div></div>
<div id="solexp"><div class="a" style="left:651px;top:41.7px;width:145px;height:12.7px;background:#f5cc84;"></div><div class="t" style="left:653.8px;top:43px;font-size:7.0px;color:#1e1e1e;letter-spacing:-0.075px;">Explorador de soluciones</div><svg class="a" style="left:768px;top:46.8px" width="4" height="2.5" viewBox="0 0 5 3"><path d="M0 0 H5 L2.5 3 Z" fill="#7a5c14"/></svg><svg class="a" style="left:777.3px;top:45px" width="4.8" height="6.4" viewBox="0 0 6 8"><path d="M1.5 0.8 H4.5 V4.4 H1.5 Z M0.5 4.6 H5.5 M3 4.6 V7.8 M3.7 0.8 V4.4" stroke="#80621a" stroke-width="1" fill="none"/></svg><svg class="a" style="left:787px;top:45.5px" width="5" height="5" viewBox="0 0 6 6"><path d="M0.5 0.5 L5.5 5.5 M5.5 0.5 L0.5 5.5" stroke="#8a6a1c" stroke-width="1.15"/></svg><div class="a" style="left:651px;top:54.3px;width:145px;height:17px;background:#ccd5f0;"></div><svg class="a" style="left:656.5px;top:59.2px" width="7" height="7" viewBox="0 0 8 8"><circle cx="4" cy="4" r="3.8" fill="#b9bdcc"/><path d="M4.3 2 L2.3 4 L4.3 6 M2.5 4 H6" stroke="#e1e5f3" stroke-width="1.1" fill="none"/></svg><svg class="a" style="left:669.3px;top:59.2px" width="7" height="7" viewBox="0 0 8 8"><circle cx="4" cy="4" r="3.8" fill="#b9bdcc"/><path d="M3.7 2 L5.7 4 L3.7 6 M5.5 4 H2" stroke="#e1e5f3" stroke-width="1.1" fill="none"/></svg><svg class="a" style="left:681.4px;top:58.400000000000006px" width="9" height="8.6" viewBox="0 0 10 10"><path d="M0.8 5.2 L5 1 L9.2 5.2 M2 4.5 V9.2 H8 V4.5 M4.2 9.2 V6.4 H5.8 V9.2" stroke="#2d2d2d" stroke-width="1" fill="#f3f5fc"/></svg><svg class="a" style="left:694px;top:58.2px" width="9.6" height="9" viewBox="0 0 10 10"><rect x="4.8" y="0.6" width="4.7" height="8" fill="#f0f0f0" stroke="#444" stroke-width="0.9"/><path d="M6 2.6 H8.4 M6 4.4 H8.4" stroke="#444" stroke-width="0.7"/><path d="M4.6 4.2 L6.2 5 V9 L4.6 9.8 L2.2 7.8 L1.1 8.6 L0.3 8.2 V6 L1.1 5.6 L2.2 6.4 Z" fill="#8a4fd0"/></svg><div class="a" style="left:707px;top:57px;width:0.8px;height:11.5px;background:#aab3d3;"></div><svg class="a" style="left:713.2px;top:58.1px" width="8.6" height="9" viewBox="0 0 10 10"><circle cx="5.8" cy="6" r="3.1" fill="none" stroke="#2d2d2d" stroke-width="1"/><path d="M5.8 4.2 V6.2 H7.4" stroke="#2d2d2d" stroke-width="0.8" fill="none"/><path d="M0.6 1.2 H2.4 M1.5 0.3 V2.1" stroke="#2d2d2d" stroke-width="0.8"/></svg><svg class="a" style="left:725.3px;top:61.900000000000006px" width="3.2" height="2" viewBox="0 0 5 3"><path d="M0 0 H5 L2.5 3 Z" fill="#3a3a3a"/></svg><svg class="a" style="left:732.4px;top:58.400000000000006px" width="9.2" height="8.6" viewBox="0 0 10 10"><path d="M1.4 4.4 C2 1.4 6.2 1 7.8 3.2 M8.6 5.6 C8 8.6 3.8 9 2.2 6.8" stroke="#0f5fb4" stroke-width="1.6" fill="none"/><path d="M9.6 0.6 V4.2 H6 Z M0.4 9.4 V5.8 H4 Z" fill="#0f5fb4"/></svg><svg class="a" style="left:746px;top:59.300000000000004px" width="7.8" height="6.8" viewBox="0 0 9 8"><rect x="3" y="0.6" width="5.4" height="4" fill="#dfe5f7" stroke="#555" stroke-width="0.8"/><rect x="0.6" y="2.8" width="5.4" height="4.4" fill="#dfe5f7" stroke="#555" stroke-width="0.8"/><path d="M2 5 H4.6" stroke="#444" stroke-width="0.9"/></svg><div class="a" style="left:756px;top:55.4px;width:13.2px;height:14.4px;background:#fbe7b0;border:0.8px solid #e5b54e"></div><svg class="a" style="left:758.3px;top:58.1px" width="8.6" height="9.2" viewBox="0 0 9 10"><path d="M0.8 0.8 H4.6 L5.4 1.6 V7 H0.8 Z" fill="#fdf6d8" stroke="#5b8a4a" stroke-width="0.8"/><path d="M3.4 3 H6.8 L8.2 4.4 V9.2 H3.4 Z" fill="#dcecc8" stroke="#4f7f3d" stroke-width="0.8"/></svg><div class="a" style="left:771.8px;top:57px;width:0.8px;height:11.5px;background:#aab3d3;"></div><svg class="a" style="left:776px;top:58.300000000000004px" width="9" height="9" viewBox="0 0 10 10"><path d="M1.2 8.8 L5.2 4.8" stroke="#222" stroke-width="2" stroke-linecap="round"/><path d="M6.8 1 C5 0.8 4 2.5 4.6 4 L6 5.4 C7.5 6 9.2 5 9 3.2 L7.4 4.4 L5.8 2.6 Z" fill="#222"/></svg><div class="t" style="left:790.6px;top:54.5px;font-size:8.5px;color:#333;">"</div><div class="a" style="left:651px;top:70.9px;width:145px;height:12.6px;background:#fdfdff;border-top:0.6px solid #dde2f2;border-bottom:0.6px solid #d5daea"></div><div class="t" style="left:654px;top:72.2px;font-size:7.1px;color:#6a6a78;letter-spacing:-0.05px;width:122.5px;overflow:hidden;">Buscar en Explorador de soluciones (Ctrl+</div><svg class="a" style="left:779.4px;top:73px" width="8" height="8" viewBox="0 0 10 10"><circle cx="6" cy="4" r="2.5" fill="none" stroke="#444" stroke-width="1.2"/><path d="M4.2 5.8 L1.2 8.8" stroke="#444" stroke-width="1.5"/></svg><svg class="a" style="left:790px;top:76.5px" width="3.4" height="2.1" viewBox="0 0 5 3"><path d="M0 0 H5 L2.5 3 Z" fill="#555"/></svg><div class="a" style="left:651px;top:83px;width:145px;height:158px;background:#fff;"></div><div class="a" style="left:651px;top:84.7px;width:145px;height:10.6px;background:#e9e9ee;"></div><svg class="a" style="left:659px;top:85.6px" width="9.4" height="8.6" viewBox="0 0 10 9"><rect x="1.5" y="0.8" width="8" height="6.4" fill="#fff" stroke="#555" stroke-width="0.8"/><rect x="1.5" y="0.8" width="8" height="1.5" fill="#555"/><path d="M4.8 3.8 L6 4.4 V8 L4.8 8.7 L2.6 6.9 L1.6 7.6 L0.8 7.2 V5.3 L1.6 4.9 L2.6 5.6 Z" fill="#8a4fd0"/></svg><div class="t" style="left:672px;top:85.2px;font-size:7.2px;color:#1e1e1e;letter-spacing:-0.12px;width:123.7px;overflow:hidden;">Solución "WebApplication9" (1 de 1 proyecto)</div><svg class="a" style="left:657.0px;top:98.3px" width="5" height="5" viewBox="0 0 5 5"><path d="M4.5 0.5 V4.5 H0.5 Z" fill="#333"/></svg><svg class="a" style="left:669px;top:96px" width="10" height="10" viewBox="0 0 10 10"><rect x="1.5" y="1" width="8" height="7" fill="#f4f4f4" stroke="#555" stroke-width="0.8"/><rect x="1.5" y="1" width="8" height="1.5" fill="#555"/><circle cx="3.5" cy="6.8" r="2.8" fill="#3c9a4e"/><path d="M1.2 6.8 H5.8 M3.5 4.2 V9.4" stroke="#a7d9b0" stroke-width="0.5"/></svg><div class="t" style="left:682.4px;top:95.8px;font-size:7.2px;color:#1e1e1e;letter-spacing:-0.231px;font-weight:bold;">WebApplication9</div><svg class="a" style="left:680.5px;top:106.5px" width="10" height="9" viewBox="0 0 10 9"><path d="M2.5 6.5 C0.5 6.5 0.5 3.8 2.5 3.8 C2.5 1.5 6 1 6.8 3.2 C9.3 3 9.3 6.5 7.2 6.5" fill="none" stroke="#444" stroke-width="0.8"/><circle cx="5" cy="6" r="1.9" fill="#3c9a4e"/><path d="M4 6 L4.8 6.8 L6 5.3" stroke="#fff" stroke-width="0.6" fill="none"/></svg><div class="t" style="left:693px;top:106.5px;font-size:7.2px;color:#1e1e1e;letter-spacing:-0.235px;">Connected Services</div><svg class="a" style="left:667.5px;top:118.8px" width="4" height="6" viewBox="0 0 4 6"><path d="M0.6 0.5 V5.5 L3.5 3 Z" fill="#fff" stroke="#2f2f2f" stroke-width="0.85"/></svg><svg class="a" style="left:680.5px;top:117px" width="10" height="10" viewBox="0 0 10 10"><path d="M1.2 8.8 L5.2 4.8" stroke="#222" stroke-width="2" stroke-linecap="round"/><path d="M6.8 1 C5 0.8 4 2.5 4.6 4 L6 5.4 C7.5 6 9.2 5 9 3.2 L7.4 4.4 L5.8 2.6 Z" fill="#222"/></svg><div class="t" style="left:693px;top:117.0px;font-size:7.2px;color:#1e1e1e;letter-spacing:-0.217px;">Properties</div><svg class="a" style="left:667.5px;top:129.3px" width="4" height="6" viewBox="0 0 4 6"><path d="M0.6 0.5 V5.5 L3.5 3 Z" fill="#fff" stroke="#2f2f2f" stroke-width="0.85"/></svg><svg class="a" style="left:681px;top:129.2px" width="8.6" height="6.6" viewBox="0 0 9 7"><rect x="0.3" y="4" width="2.6" height="2.6" fill="#333"/><rect x="6" y="0.4" width="2.6" height="2.6" fill="#333"/><rect x="3.4" y="2.4" width="2" height="2" fill="#444"/><path d="M0.6 1.4 H2.4 M1.5 0.5 V2.3 M6.2 5.4 H8.4" stroke="#333" stroke-width="0.8"/></svg><div class="t" style="left:693px;top:127.5px;font-size:7.2px;color:#1e1e1e;letter-spacing:-0.296px;">Referencias</div><svg class="a" style="left:681.2px;top:139.5px" width="8" height="6.6" viewBox="0 0 9 8"><path d="M0.3 0.8 H3.8 L4.6 1.8 H8.7 V7.6 H0.3 Z" fill="#dcb67a"/></svg><div class="t" style="left:693px;top:138.0px;font-size:7.2px;color:#1e1e1e;letter-spacing:-0.296px;">App_Data</div><svg class="a" style="left:667.5px;top:150.3px" width="4" height="6" viewBox="0 0 4 6"><path d="M0.6 0.5 V5.5 L3.5 3 Z" fill="#fff" stroke="#2f2f2f" stroke-width="0.85"/></svg><svg class="a" style="left:681.2px;top:150.0px" width="8" height="6.6" viewBox="0 0 9 8"><path d="M0.3 0.8 H3.8 L4.6 1.8 H8.7 V7.6 H0.3 Z" fill="#dcb67a"/></svg><div class="t" style="left:693px;top:148.5px;font-size:7.2px;color:#1e1e1e;letter-spacing:-0.263px;">App_Start</div><svg class="a" style="left:667.5px;top:161.7px" width="5" height="5" viewBox="0 0 5 5"><path d="M4.5 0.5 V4.5 H0.5 Z" fill="#333"/></svg><svg class="a" style="left:681.0px;top:159.8px" width="9" height="8" viewBox="0 0 9 8"><path d="M0.6 1 H3.5 L4.3 2 H7.6 V3.4 M0.6 1 V7.2 H7 L8.6 3.4 H2.2 L0.6 7.2" fill="#fff" stroke="#dcb67a" stroke-width="0.9"/></svg><div class="t" style="left:693px;top:159.0px;font-size:7.2px;color:#1e1e1e;letter-spacing:-0.088px;">Controllers</div><svg class="a" style="left:678px;top:171.3px" width="4" height="6" viewBox="0 0 4 6"><path d="M0.6 0.5 V5.5 L3.5 3 Z" fill="#fff" stroke="#2f2f2f" stroke-width="0.85"/></svg><div class="t" style="left:692px;top:169.7px;font-size:6.6px;font-weight:bold;color:#2e8b3a;letter-spacing:-0.2px">C<span style="font-size:4.6px;position:relative;top:-1.5px">#</span></div><div class="t" style="left:703.5px;top:169.5px;font-size:7.2px;color:#1e1e1e;letter-spacing:-0.041px;">ControlController.cs</div><svg class="a" style="left:681.2px;top:181.7px" width="8" height="6.6" viewBox="0 0 9 8"><path d="M0.3 0.8 H3.8 L4.6 1.8 H8.7 V7.6 H0.3 Z" fill="#dcb67a"/></svg><div class="t" style="left:693px;top:180.2px;font-size:7.2px;color:#1e1e1e;letter-spacing:-0.095px;">Models</div><svg class="a" style="left:667.5px;top:192.5px" width="4" height="6" viewBox="0 0 4 6"><path d="M0.6 0.5 V5.5 L3.5 3 Z" fill="#fff" stroke="#2f2f2f" stroke-width="0.85"/></svg><svg class="a" style="left:681px;top:190.5px" width="9" height="10" viewBox="0 0 9 10"><path d="M3 0.8 H6.5 L8.3 2.6 V9.2 H4.5" fill="#fff" stroke="#444" stroke-width="0.8"/><circle cx="2.8" cy="6.8" r="2.3" fill="#fff" stroke="#333" stroke-width="0.8"/><path d="M0.5 6.8 H5.1 M2.8 4.5 V9.1" stroke="#333" stroke-width="0.5"/></svg><div class="t" style="left:693px;top:190.7px;font-size:7.2px;color:#1e1e1e;letter-spacing:-0.306px;">Global.asax</div><svg class="a" style="left:681.0px;top:201.3px" width="9" height="10" viewBox="0 0 9 10"><path d="M2.5 0.8 H6.5 L8.3 2.6 V9.2 H2.5 Z" fill="#fff" stroke="#444" stroke-width="0.8"/><path d="M0.8 5.5 L2 4.3 L3.2 5.5 L2 6.7 Z M2 6.7 V8.8 M3.2 5.5 H4.8" stroke="#333" stroke-width="0.9" fill="#fff"/></svg><div class="t" style="left:693px;top:201.5px;font-size:7.2px;color:#1e1e1e;letter-spacing:-0.124px;">packages.config</div><svg class="a" style="left:667.5px;top:213.8px" width="4" height="6" viewBox="0 0 4 6"><path d="M0.6 0.5 V5.5 L3.5 3 Z" fill="#fff" stroke="#2f2f2f" stroke-width="0.85"/></svg><svg class="a" style="left:681.0px;top:211.8px" width="9" height="10" viewBox="0 0 9 10"><path d="M2.5 0.8 H6.5 L8.3 2.6 V9.2 H2.5 Z" fill="#fff" stroke="#444" stroke-width="0.8"/><path d="M0.8 5.5 L2 4.3 L3.2 5.5 L2 6.7 Z M2 6.7 V8.8 M3.2 5.5 H4.8" stroke="#333" stroke-width="0.9" fill="#fff"/></svg><div class="t" style="left:693px;top:212.0px;font-size:7.2px;color:#1e1e1e;letter-spacing:-0.053px;">Web.config</div><div class="a" style="left:651px;top:230px;width:145px;height:10.8px;background:#f0f1f5;"></div><div class="a" style="left:661px;top:232.3px;width:111px;height:5.5px;background:#c2c3c9;"></div><svg class="a" style="left:654.5px;top:232.5px" width="3" height="5" viewBox="0 0 3 5"><path d="M3 0 V5 L0 2.5 Z" fill="#868999"/></svg><svg class="a" style="left:789.5px;top:232.5px" width="3" height="5" viewBox="0 0 3 5"><path d="M0 0 V5 L3 2.5 Z" fill="#868999"/></svg><div class="a" style="left:651px;top:240.5px;width:83px;height:11px;background:#fdfdff;"></div><div class="t" style="left:654.2px;top:241.3px;font-size:6.9px;color:#1e1e1e;letter-spacing:-0.032px;">Explorador de soluciones</div><div class="a" style="left:734px;top:241.3px;width:55px;height:10.2px;background:#40508d;"></div><div class="t" style="left:739.2px;top:241.3px;font-size:6.9px;color:#fff;letter-spacing:-0.162px;">Cambios de GIT</div></div>
<div id="props"><div class="a" style="left:651px;top:256.5px;width:145px;height:12.5px;background:#40508d;"></div><div class="t" style="left:654px;top:257.8px;font-size:7.2px;color:#fff;letter-spacing:-0.252px;">Propiedades</div><svg class="a" style="left:768px;top:261px" width="4" height="2.5" viewBox="0 0 5 3"><path d="M0 0 H5 L2.5 3 Z" fill="#a9b5df"/></svg><svg class="a" style="left:777.3px;top:259.2px" width="4.8" height="6.4" viewBox="0 0 6 8"><path d="M1.5 0.8 H4.5 V4.4 H1.5 Z M0.5 4.6 H5.5 M3 4.6 V7.8 M3.7 0.8 V4.4" stroke="#a9b5df" stroke-width="1" fill="none"/></svg><svg class="a" style="left:787px;top:259.9px" width="5" height="5" viewBox="0 0 6 6"><path d="M0.5 0.5 L5.5 5.5 M5.5 0.5 L0.5 5.5" stroke="#a9b5df" stroke-width="1.15"/></svg><div class="a" style="left:651px;top:268.5px;width:145px;height:139.7px;background:#fff;"></div><div class="t" style="left:654.5px;top:270.7px;font-size:7.2px;color:#1e1e1e;letter-spacing:-0.171px;font-weight:bold;">WebApplication9</div><div class="t" style="left:714.2px;top:270.7px;font-size:7.2px;color:#1e1e1e;letter-spacing:-0.201px;">Propiedades de la soluc</div><svg class="a" style="left:790px;top:275px" width="4" height="2.5" viewBox="0 0 5 3"><path d="M0 0 H5 L2.5 3 Z" fill="#333"/></svg><div class="a" style="left:651px;top:283px;width:145px;height:14.4px;background:#ccd5f0;"></div><div class="a" style="left:653px;top:284.3px;width:13.4px;height:12.5px;background:#fbe7b0;border:0.8px solid #e5b54e"></div><svg class="a" style="left:655px;top:286px" width="10" height="9" viewBox="0 0 10 9"><rect x="0.5" y="0.5" width="3" height="3" fill="none" stroke="#222" stroke-width="0.8"/><rect x="0.5" y="5.2" width="3" height="3" fill="none" stroke="#222" stroke-width="0.8"/><path d="M5 1 H9.5 M5 2.8 H9.5 M5 5.6 H9.5 M5 7.4 H9.5" stroke="#222" stroke-width="0.8"/></svg><svg class="a" style="left:668.5px;top:286px" width="10" height="9" viewBox="0 0 10 9"><rect x="0.5" y="0.5" width="3.4" height="3.4" fill="#333"/><rect x="0.5" y="5" width="3.4" height="3.4" fill="none" stroke="#333" stroke-width="0.8"/><path d="M7 1 V8 M5.2 6 L7 8.2 L8.8 6" stroke="#1a5fc4" stroke-width="1.1" fill="none"/></svg><div class="a" style="left:681.5px;top:285px;width:0.8px;height:11px;background:#aab3d3;"></div><svg class="a" style="left:685.5px;top:285.5px" width="10" height="10" viewBox="0 0 10 10"><path d="M1.2 8.8 L5.2 4.8" stroke="#222" stroke-width="2" stroke-linecap="round"/><path d="M6.8 1 C5 0.8 4 2.5 4.6 4 L6 5.4 C7.5 6 9.2 5 9 3.2 L7.4 4.4 L5.8 2.6 Z" fill="#222"/></svg><div class="a" style="left:651px;top:297.4px;width:145px;height:13px;background:#eeeef2;"></div><div class="a" style="left:651px;top:297.4px;width:9.5px;height:67.6px;background:#eeeef2;"></div><div class="a" style="left:653.4px;top:301.5px;width:5.2px;height:5.2px;background:#fff;border:0.6px solid #4a4a4a"></div><div class="a" style="left:654.6px;top:303.8px;width:2.8px;height:0.6px;background:#333;"></div><div class="t" style="left:662px;top:299.6px;font-size:7.2px;color:#1e1e1e;letter-spacing:-0.380px;font-weight:bold;">Varios</div><div class="t" style="left:662.5px;top:311.2px;font-size:7.2px;color:#1e1e1e;letter-spacing:-0.032px;width:59px;overflow:hidden;">(Nombre)</div><div class="t" style="left:723px;top:311.2px;font-size:7.2px;color:#1e1e1e;letter-spacing:-0.191px;width:73px;overflow:hidden;font-weight:bold;">WebApplication9</div><div class="a" style="left:660.5px;top:321.3px;width:135.5px;height:0.6px;background:#eeeef2;"></div><div class="t" style="left:662.5px;top:322.25px;font-size:7.2px;color:#1e1e1e;letter-spacing:0.109px;width:59px;overflow:hidden;">Configuración activa</div><div class="t" style="left:723px;top:322.25px;font-size:7.2px;color:#1e1e1e;letter-spacing:-0.294px;width:73px;overflow:hidden;font-weight:bold;">Debug|Any CPU</div><div class="a" style="left:660.5px;top:332.35px;width:135.5px;height:0.6px;background:#eeeef2;"></div><div class="t" style="left:662.5px;top:333.3px;font-size:7.2px;color:#1e1e1e;letter-spacing:-0.160px;width:59px;overflow:hidden;">Descripción</div><div class="a" style="left:660.5px;top:343.40000000000003px;width:135.5px;height:0.6px;background:#eeeef2;"></div><div class="t" style="left:662.5px;top:344.34999999999997px;font-size:7.2px;color:#1e1e1e;letter-spacing:-0.091px;width:59px;overflow:hidden;">Proyecto de inicio</div><div class="t" style="left:723px;top:344.34999999999997px;font-size:7.2px;color:#1e1e1e;letter-spacing:-0.191px;width:73px;overflow:hidden;font-weight:bold;">WebApplication9</div><div class="a" style="left:660.5px;top:354.45px;width:135.5px;height:0.6px;background:#eeeef2;"></div><div class="t" style="left:662.5px;top:355.4px;font-size:7.2px;color:#8a8a8a;letter-spacing:-0.297px;width:59px;overflow:hidden;">Ruta de acceso</div><div class="t" style="left:723px;top:355.4px;font-size:7.2px;color:#5a5a5a;letter-spacing:0.035px;width:73px;overflow:hidden;">C:\Users\juan\source\repos</div><div class="a" style="left:660.5px;top:365.5px;width:135.5px;height:0.6px;background:#eeeef2;"></div><div class="a" style="left:721.5px;top:310.4px;width:0.6px;height:54.6px;background:#e6e6ec;"></div><div class="a" style="left:651px;top:365px;width:145px;height:6.8px;background:#f6f7fc;"></div><div class="t" style="left:654.5px;top:375.7px;font-size:7.2px;color:#1e1e1e;letter-spacing:-0.019px;font-weight:bold;">(Nombre)</div><div class="t" style="left:654.5px;top:385.9px;font-size:7.2px;color:#1e1e1e;letter-spacing:-0.064px;">Nombre del archivo de la solución.</div></div>
<div id="tooltip"><div class="a" style="left:337px;top:33.1px;width:94.3px;height:13.8px;background:#f4f5f9;border:0.7px solid #b8bccb;box-shadow:0.5px 0.5px 1px rgba(0,0,0,.25)"></div><div class="t" style="left:340.7px;top:35.2px;font-size:6.9px;color:#5a5a62;letter-spacing:-0.129px;">IIS Express (Google Chrome)</div></div>
<div id="status"><div class="a" style="left:0px;top:412.6px;width:800px;height:13.2px;background:#40508d;"></div><div class="a" style="left:0px;top:425.6px;width:800px;height:5.5px;background:#1b1b1f;"></div><div class="a" style="left:172px;top:425.6px;width:28px;height:5.5px;background:#4a4a52;"></div><div class="a" style="left:796.5px;top:425.8px;width:0.8px;height:5.3px;background:#6a6a6a;"></div><svg class="a" style="left:3px;top:416.2px" width="9" height="7" viewBox="0 0 9 7"><path d="M2 0.6 H8.4 L7 6.4 H0.6 Z" fill="none" stroke="#e8ecfa" stroke-width="0.9"/></svg><div class="t" style="left:16.5px;top:415px;font-size:7.2px;color:#fff;letter-spacing:-0.157px;">Listo</div><svg class="a" style="left:639px;top:415.6px" width="7" height="8" viewBox="0 0 7 8"><path d="M3.5 7.5 V1.5 M1 3.8 L3.5 1 L6 3.8" stroke="#fff" stroke-width="1.1" fill="none"/></svg><div class="t" style="left:651px;top:415px;font-size:7.1px;color:#fff;letter-spacing:-0.035px;">Agregar al control de código fuente</div><svg class="a" style="left:764.3px;top:418.6px" width="5" height="3" viewBox="0 0 5 3"><path d="M0 3 H5 L2.5 0 Z" fill="#fff"/></svg><svg class="a" style="left:781px;top:415px" width="8" height="9" viewBox="0 0 8 9"><path d="M4 0.6 C2 0.6 1.6 2.5 1.6 4 C1.6 5.5 0.6 6 0.6 6.8 H7.4 C7.4 6 6.4 5.5 6.4 4 C6.4 2.5 6 0.6 4 0.6 Z" fill="#fff"/><path d="M3 7.6 H5 V8.4 H3 Z" fill="#fff"/></svg><div class="a" style="left:0;top:425.6px;width:800px;height:5.4px;overflow:hidden"><div class="a" style="left:741px;top:3.8px;font-size:6.5px;line-height:6px;color:#e8e8e8">11:12</div></div></div>
</body>
</html>
